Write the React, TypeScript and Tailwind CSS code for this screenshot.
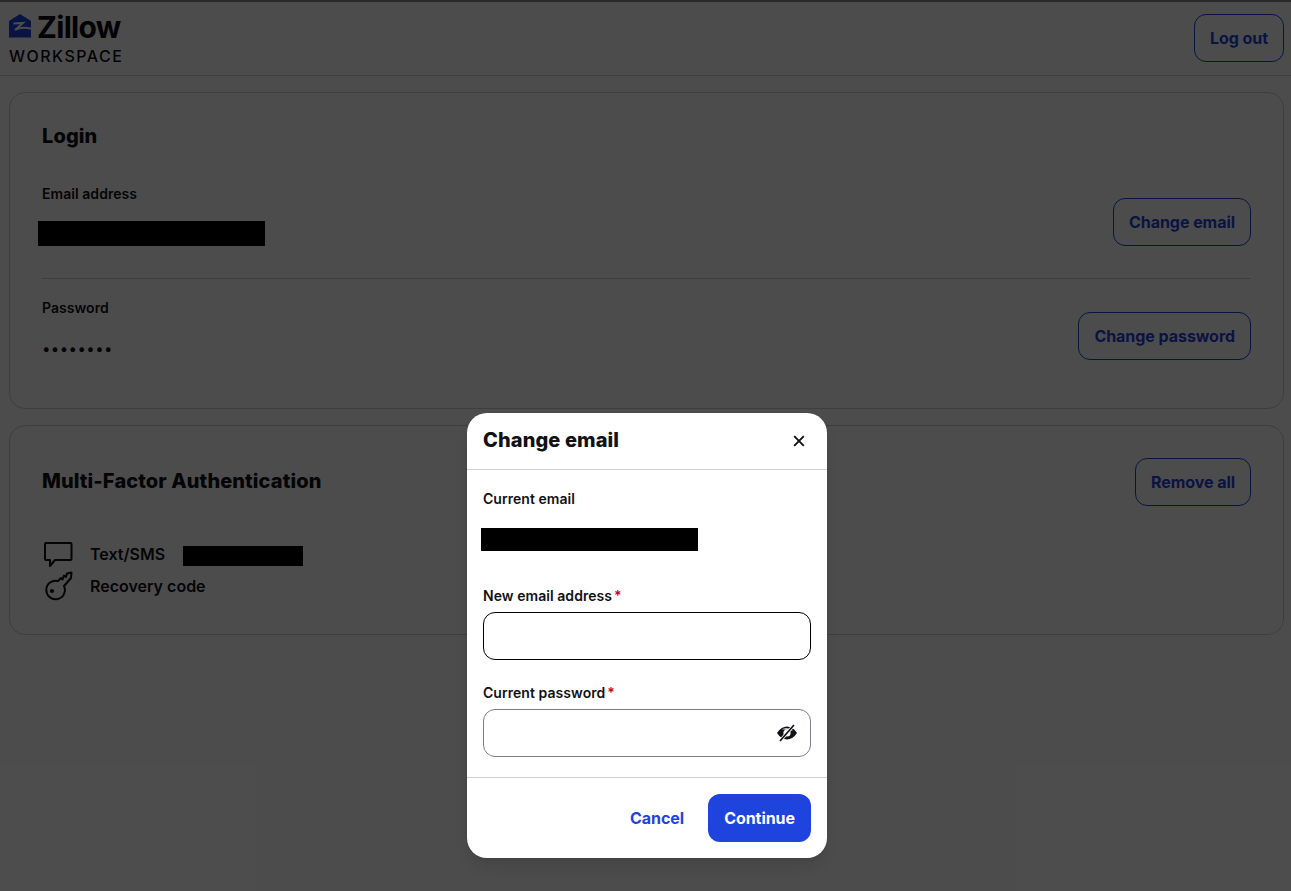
import React from "react";

const font = { fontFamily: "Inter, 'Liberation Sans', sans-serif" };

function OutlineButton({ children, className = "" }: { children: React.ReactNode; className?: string }) {
  return (
    <button className={`h-12 shrink-0 rounded-xl border border-[#1f44dd] bg-white px-[15px] text-base font-bold tracking-[-0.05px] text-[#1f44dd] ${className}`}>
      {children}
    </button>
  );
}

function Logo() {
  return (
    <div className="flex flex-col">
      <div className="flex h-[26px] items-center">
        <svg width="22" height="24" viewBox="0 0 22 24" className="mr-[6px] shrink-0 self-start">
          <path d="M11 0 L22 7 V23.5 H0 V7 Z" fill="#1f44dd" />
          <path d="M4.5 9.5 L14 9 L6 16 C10.5 13.2 16 13.2 22 14.5" fill="none" stroke="#ffffff" strokeWidth="2" />
        </svg>
        <span className="text-[30px] font-bold leading-none tracking-[-0.7px] text-[#0d0c14]">Zillow</span>
      </div>
      <span className="mt-[6px] text-base leading-[20px] font-medium tracking-[1.5px] text-[#0d0c14]">WORKSPACE</span>
    </div>
  );
}

function Label({ children, required }: { children: React.ReactNode; required?: boolean }) {
  return (
    <div className="text-sm leading-5 font-semibold tracking-[0.05px] text-[#111116]">
      {children}
      {required && <span className="ml-[2px] text-[#c4002d]">*</span>}
    </div>
  );
}

function Redacted({ className }: { className: string }) {
  return <div className={`bg-black ${className}`} />;
}

export default function App() {
  return (
    <div style={font} className="relative h-[891px] w-[1291px] overflow-hidden bg-white">
      <div className="h-[2px] bg-[#8c8587]" />
      <header className="flex h-[74px] items-start justify-between border-b border-[#d1d1d5] pl-[9px] pr-[7px] pt-3">
        <Logo />
        <OutlineButton>Log out</OutlineButton>
      </header>

      <main className="flex flex-col gap-4 pl-[9px] pr-[7px] pt-4">
        <section className="h-[317px] rounded-2xl border border-[#d1d1d5] pl-8 pr-8 pt-8">
          <h2 className="text-xl leading-[22px] font-extrabold tracking-[0.1px] text-[#111116]">Login</h2>
          <div className="mt-[37px] flex h-[95px] items-start justify-between border-b border-[#d1d1d5]">
            <div>
              <Label>Email address</Label>
              <Redacted className="-ml-1 mt-[17px] h-[25px] w-[227px]" />
            </div>
            <OutlineButton className="mt-[14px]">Change email</OutlineButton>
          </div>
          <div className="mt-[19px] flex items-start justify-between">
            <div>
              <Label>Password</Label>
              <div className="mt-[21px] text-[15px] leading-5 tracking-[0.42px] text-[#111116]">••••••••</div>
            </div>
            <OutlineButton className="mt-[14px]">Change password</OutlineButton>
          </div>
        </section>

        <section className="h-[210px] rounded-2xl border border-[#d1d1d5] px-8 pt-8">
          <div className="flex items-start justify-between">
            <h2 className="mt-[11px] text-xl leading-[24px] font-extrabold tracking-[0.1px] text-[#111116]">Multi-Factor Authentication</h2>
            <OutlineButton>Remove all</OutlineButton>
          </div>
          <div className="mt-[32px] flex h-[32px] items-center">
            <svg width="30" height="30" viewBox="0 0 30 30" fill="none" stroke="#111116" strokeWidth="2" strokeLinejoin="round" className="ml-[1px] mr-[17px] shrink-0">
              <path d="M3 4 H27.5 A1 1 0 0 1 28.5 5 V20 A1 1 0 0 1 27.5 21 H12 L7 27 V21 H3 A1 1 0 0 1 2 20 V5 A1 1 0 0 1 3 4 Z" />
            </svg>
            <span className="text-base font-semibold tracking-[0.02px] text-[#111116]">Text/SMS</span>
            <Redacted className="ml-[18px] mt-1 h-5 w-[120px]" />
          </div>
          <div className="flex h-[32px] items-center">
            <svg width="30" height="30" viewBox="0 0 30 30" fill="none" stroke="#111116" strokeWidth="2" strokeLinejoin="round" className="ml-[1px] mr-[17px] shrink-0">
              <path d="M15 10 L18 7 L19.5 8.5 L21 4.5 L23 6 L24 2.5 L28.5 1.5 L28 7 L21 15 A9.3 9.3 0 1 1 15 10 Z" />
              <circle cx="9" cy="20" r="1.1" fill="#111116" />
            </svg>
            <span className="text-base font-semibold text-[#111116]">Recovery code</span>
          </div>
        </section>
      </main>

      <div className="absolute inset-0 bg-black/70" />

      <div className="absolute left-[467px] top-[413px] flex h-[445px] w-[360px] flex-col rounded-[20px] bg-white shadow-lg">
        <div className="flex h-[57px] shrink-0 items-center justify-between border-b border-[#d1d1d5] pl-4 pr-[21px]">
          <h2 className="-mt-[2px] text-xl font-extrabold tracking-[0.1px] text-[#111116]">Change email</h2>
          <svg width="14" height="14" viewBox="0 0 14 14" stroke="#111116" strokeWidth="1.9">
            <path d="M2.2 2.2 L11.8 11.8 M11.8 2.2 L2.2 11.8" />
          </svg>
        </div>
        <div className="flex-1 px-4 pt-[19px]">
          <Label>Current email</Label>
          <Redacted className="-ml-[2px] mt-[19px] h-[23px] w-[217px]" />
          <div className="mt-[35px]">
            <Label required>New email address</Label>
          </div>
          <div className="mt-[6px] h-12 rounded-xl border border-black" />
          <div className="mt-[23px]">
            <Label required>Current password</Label>
          </div>
          <div className="mt-[6px] flex h-12 items-center justify-end rounded-xl border border-[#7f7d90] pr-3">
            <svg width="22" height="20" viewBox="0 0 22 20" fill="none" className="-mt-[1px]">
              <path d="M1 10 C4 5.5 7.5 3.5 11 3.5 C14.5 3.5 18 5.5 21 10 C18 14.5 14.5 16.5 11 16.5 C7.5 16.5 4 14.5 1 10 Z" fill="#111116" />
              <circle cx="11" cy="10" r="3.6" fill="#ffffff" />
              <path d="M6 6.3 C7.5 5.5 9 5.2 11 5.2 C13 5.2 15 6 17 7.8 L14 7.2 Z" fill="#ffffff" opacity="0.9" />
              <path d="M18 2 L4 18" stroke="#ffffff" strokeWidth="3.2" />
              <path d="M18 2 L4 18" stroke="#111116" strokeWidth="1.6" />
            </svg>
          </div>
        </div>
        <div className="flex h-[81px] shrink-0 items-start justify-end gap-6 border-t border-[#d1d1d5] pr-4 pt-4">
          <button className="h-12 text-base font-bold tracking-[-0.05px] text-[#1f44dd]">Cancel</button>
          <button className="h-12 rounded-xl bg-[#1f44dd] px-4 text-base font-bold tracking-[-0.05px] text-white">Continue</button>
        </div>
      </div>
    </div>
  );
}
